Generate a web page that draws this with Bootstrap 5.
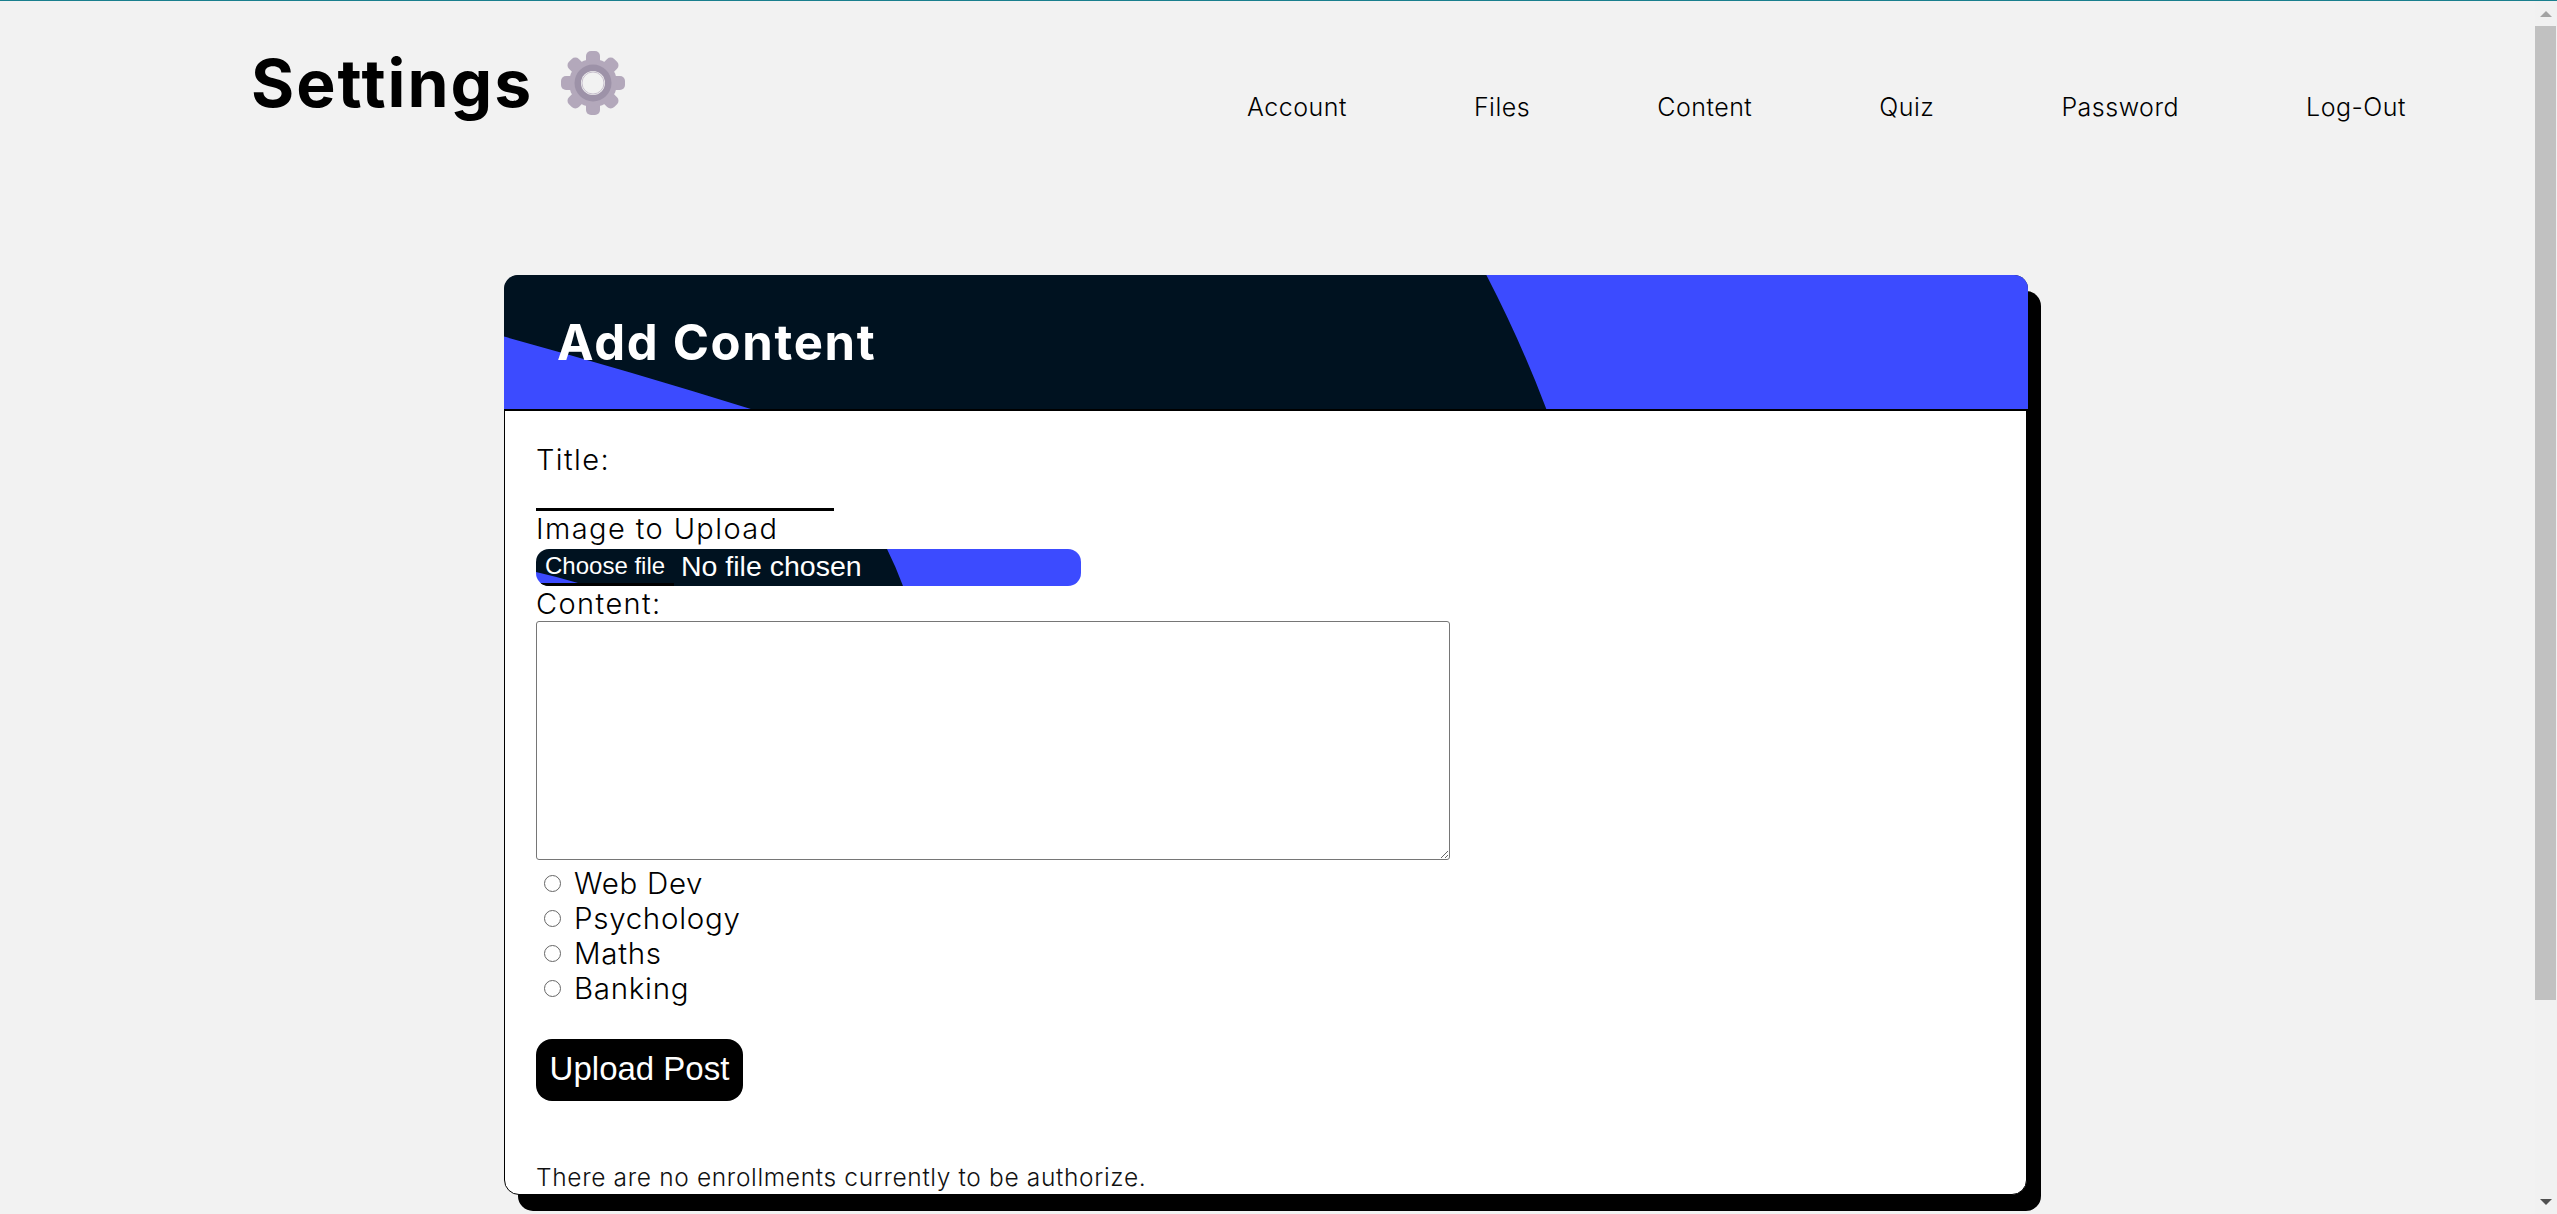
<!DOCTYPE html>
<html lang="en">
<head>
<meta charset="utf-8">
<title>Settings</title>
<link href="https://cdn.jsdelivr.net/npm/bootstrap@5.3.0/dist/css/bootstrap.min.css" rel="stylesheet">
<style>
html,body{height:100%;overflow:hidden}
body{background:#f2f2f2;font-family:Inter,"Liberation Sans",sans-serif;color:#000;border-top:1px solid #1a7f8e}
.shell{height:1213px}
.pagearea{min-width:0}
.topbar{padding:0 129px 0 251px;height:134px}
.pagetitle{font-size:66px;font-weight:700;line-height:1;margin:49px 0 0;letter-spacing:2px}
.gearicon{width:64px;height:64px;margin:50px 0 0 28px}
.mainnav{gap:127px;margin-top:90px}
.mainnav a{font-size:25px;line-height:32px;color:#000;text-decoration:none;padding:0;letter-spacing:.5px;font-weight:300}
.formcard{margin:140px 0 0 504px;width:1523px;height:920px;background:#fff;border:1px solid #000;border-radius:15px;box-shadow:14px 16px 0 #000}
.formcard .formhead{margin:-1px -2px 0 -1px;height:137px;padding:0 0 0 53px;border:0;border-bottom:2px solid #000;border-radius:14px 14px 0 0;background:#001220 url("data:image/svg+xml,%3Csvg xmlns='http://www.w3.org/2000/svg' viewBox='0 0 1525 135' preserveAspectRatio='none'%3E%3Cpath fill='%233c4bff' d='M983 0Q1017 66 1043 135H1525V0ZM0 62Q130 98 247 135H0Z'/%3E%3C/svg%3E") 0 0/100% 100% no-repeat}
.formhead h2{color:#fff;font-size:49px;font-weight:700;line-height:1;margin:0;letter-spacing:1.7px}
.formbody{padding:31px 0 0 31px}
.fieldlabel{display:block;font-size:29px;line-height:35px;margin:0;font-weight:300;letter-spacing:1.4px;color:#000}
.titleinput{display:block;width:298px;height:34px;border:0;border-bottom:3px solid #000;background:transparent;outline:0;padding:0}
.filepicker{width:545px;height:37px;margin-top:3px;border-radius:13px;overflow:hidden;color:#fff;font-family:"Liberation Sans",sans-serif;background:#001220 url("data:image/svg+xml,%3Csvg xmlns='http://www.w3.org/2000/svg' viewBox='0 0 545 37' preserveAspectRatio='none'%3E%3Cpath fill='%233c4bff' d='M351 0Q360 18 367 37H545V0ZM0 23Q22 28 42 34H0Z'/%3E%3C/svg%3E") 0 0/100% 100% no-repeat}
.filebtn{width:138px;height:37px;margin:0;padding:0 0 0 9px;border-bottom:3px solid #000;font-size:24px;line-height:34px;cursor:pointer}
.filename{font-size:28.5px;line-height:32px;margin:0 0 4px 7px}
.contentarea{display:block;width:914px;height:239px;border:1px solid #767676;border-radius:3px;margin-bottom:6px;padding:2px;box-shadow:none}
.topicrow{height:35px;margin:0;padding:0 0 0 8px;gap:13px}
.topicrow .form-check-input{float:none;margin:0;width:17px;height:17px;border:1.6px solid #666;flex:none}
.topicrow .form-check-label{font-size:29.5px;line-height:35px;font-weight:300;letter-spacing:.7px}
.uploadbtn{display:block;width:207px;height:62px;margin-top:33px;padding:0 0 3px;border:0;border-radius:16px;background:#000;color:#fff;font-family:"Liberation Sans",sans-serif;font-size:33px;line-height:1}
.uploadbtn:hover{background:#000;color:#fff}
.notice{font-size:24.5px;line-height:33px;margin:60px 0 0;font-weight:300;letter-spacing:.65px;color:#111}
.fakebar{width:22px;flex:none;background:#f1f1f1}
.fakebar .thumb{height:974px;margin:0 1px 0 0;background:#c1c1c1}
.arrow{height:25px;flex:none;position:relative}
.arrow-up::after,.arrow-down::after{content:"";position:absolute;left:5px;border-left:6px solid transparent;border-right:6px solid transparent}
.arrow-up::after{top:10px;border-bottom:6px solid #a3a3a3}
.arrow-down::after{bottom:9px;border-top:6px solid #505050}
</style>
</head>
<body>
<div class="shell d-flex">
  <div class="pagearea flex-grow-1">
    <header class="topbar d-flex justify-content-between align-items-start">
      <div class="d-flex align-items-start">
        <h1 class="pagetitle">Settings</h1>
        <svg class="gearicon" viewBox="0 0 64 64" aria-hidden="true">
          <g fill="#b3a8bb">
            <rect x="25" y="0" width="14" height="64" rx="5"/>
            <rect x="25" y="0" width="14" height="64" rx="5" transform="rotate(45 32 32)"/>
            <rect x="25" y="0" width="14" height="64" rx="5" transform="rotate(90 32 32)"/>
            <rect x="25" y="0" width="14" height="64" rx="5" transform="rotate(135 32 32)"/>
            <circle cx="32" cy="32" r="24"/>
          </g>
          <circle cx="32" cy="32" r="18.5" fill="#9d92a8"/>
          <circle cx="32" cy="32" r="12" fill="#f2f2f2"/>
          <circle cx="32" cy="32" r="11" fill="none" stroke="#b3a8bb" stroke-width=".7"/>
        </svg>
      </div>
      <nav class="nav mainnav">
        <a class="nav-link" href="#">Account</a>
        <a class="nav-link" href="#">Files</a>
        <a class="nav-link" href="#">Content</a>
        <a class="nav-link" href="#">Quiz</a>
        <a class="nav-link" href="#">Password</a>
        <a class="nav-link" href="#">Log-Out</a>
      </nav>
    </header>
    <section class="card formcard">
      <div class="card-header formhead d-flex align-items-center">
        <h2>Add Content</h2>
      </div>
      <form class="formbody" onsubmit="return false">
        <label class="fieldlabel" for="posttitle">Title:</label>
        <input class="titleinput" id="posttitle" type="text">
        <label class="fieldlabel" for="postimage">Image to Upload</label>
        <div class="filepicker d-flex align-items-center">
          <input class="d-none" id="postimage" type="file">
          <label class="filebtn" for="postimage">Choose file</label>
          <span class="filename">No file chosen</span>
        </div>
        <label class="fieldlabel" for="postcontent">Content:</label>
        <textarea class="form-control contentarea" id="postcontent"></textarea>
        <div class="form-check d-flex align-items-center topicrow"><input class="form-check-input" type="radio" name="topic" id="t1"><label class="form-check-label" for="t1">Web Dev</label></div>
        <div class="form-check d-flex align-items-center topicrow"><input class="form-check-input" type="radio" name="topic" id="t2"><label class="form-check-label" for="t2">Psychology</label></div>
        <div class="form-check d-flex align-items-center topicrow"><input class="form-check-input" type="radio" name="topic" id="t3"><label class="form-check-label" for="t3">Maths</label></div>
        <div class="form-check d-flex align-items-center topicrow"><input class="form-check-input" type="radio" name="topic" id="t4"><label class="form-check-label" for="t4">Banking</label></div>
        <button class="btn uploadbtn" type="submit">Upload Post</button>
        <p class="notice">There are no enrollments currently to be authorize.</p>
      </form>
    </section>
  </div>
  <aside class="fakebar d-flex flex-column" aria-hidden="true">
    <div class="arrow arrow-up"></div>
    <div class="thumb"></div>
    <div class="flex-grow-1"></div>
    <div class="arrow arrow-down"></div>
  </aside>
</div>
<script src="https://cdn.jsdelivr.net/npm/bootstrap@5.3.0/dist/js/bootstrap.bundle.min.js"></script>
</body>
</html>
